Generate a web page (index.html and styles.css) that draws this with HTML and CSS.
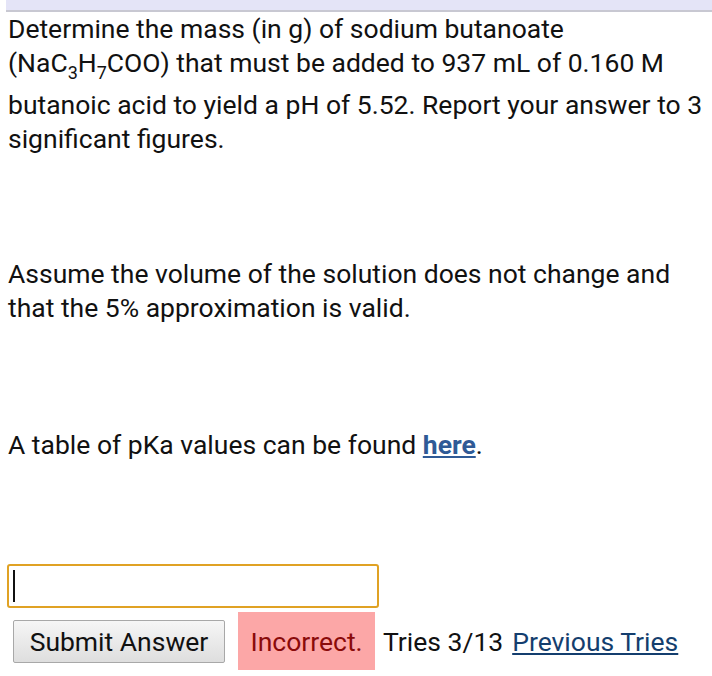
FILE: index.html
```html
<!DOCTYPE html>
<html>
<head>
<meta charset="utf-8">
<link rel="stylesheet" href="styles.css">
</head>
<body>
<div class="topbar"></div>
<div class="content">
  <p class="q first">Determine the mass (in g) of sodium butanoate (NaC<sub>3</sub>H<sub>7</sub>COO) that must be added to 937 mL of 0.160 M butanoic acid to yield a pH of 5.52. Report your answer to 3 significant figures.</p>
  <p class="q">Assume the volume of the solution does not change and that the 5% approximation is valid.</p>
  <p class="q">A table of pKa values can be found <a class="here" href="#">here</a>.</p>
  <div class="input"><span class="caret"></span></div>
  <div class="controls">
    <button class="submit">Submit Answer</button>
    <span class="incorrect">Incorrect.</span>
    <span class="tries">Tries 3/13</span>
    <a class="prev" href="#">Previous Tries</a>
  </div>
</div>
</body>
</html>
```
FILE: styles.css
```css
html, body {
  margin: 0;
  padding: 0;
  background: #fff;
}
body {
  font-family: Roboto, "Liberation Sans", sans-serif;
  color: #111;
  font-size: 26.5px;
  width: 712px;
  overflow: hidden;
}
.topbar {
  margin-left: 6px;
  height: 10px;
  background: #e4e4f7;
  border-bottom: 2px solid #c8c8d2;
}
.content {
  padding-left: 8px;
  padding-right: 0;
}
.q {
  margin: 0 0 103px 0;
  line-height: 34px;
}
.q.first {
  margin-bottom: 101px;
}
sub {
  font-size: 18px;
  line-height: 30px;
  vertical-align: -7px;
}
.here {
  color: #2f5a96;
  font-weight: bold;
  text-decoration: underline;
}
.q:last-of-type {
  margin-bottom: 102px;
}
.input {
  box-sizing: border-box;
  width: 372px;
  height: 44px;
  margin-left: -1px;
  border: 2px solid #e0a224;
  border-radius: 3px;
  display: flex;
  align-items: center;
  padding-left: 4px;
}
.caret {
  display: block;
  width: 2px;
  height: 32px;
  background: #111;
}
.controls {
  display: flex;
  align-items: center;
  margin-top: 4px;
  height: 58px;
}
.submit {
  box-sizing: border-box;
  margin-left: 5px;
  width: 212px;
  height: 43px;
  font-family: Roboto, "Liberation Sans", sans-serif;
  font-size: 26.5px;
  color: #111;
  border: 1px solid #a8a8a8;
  border-radius: 2px;
  background: linear-gradient(#f6f6f6, #dedede);
  padding: 0;
}
.incorrect {
  margin-left: 13px;
  height: 58px;
  width: 137px;
  box-sizing: border-box;
  background: #fca7a7;
  color: #8a0a0a;
  display: flex;
  align-items: center;
  justify-content: center;
}
.tries {
  margin-left: 8px;
}
.prev {
  margin-left: 9px;
  color: #143e6e;
  text-decoration: underline;
}
```
